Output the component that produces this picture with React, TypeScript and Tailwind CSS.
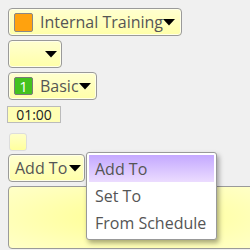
const font = { fontFamily: '"Open Sans", "Noto Sans", sans-serif' };

function Caret() {
  return (
    <svg width="12" height="7" viewBox="0 0 12 7" className="shrink-0">
      <polygon points="0,0 12,0 6,6.5" fill="#000" />
    </svg>
  );
}

const boxCls =
  "flex items-center whitespace-nowrap h-[28px] rounded-[4px] border border-[#9a9a9a] bg-gradient-to-b from-[#ffffd0] to-[#ffffa8] shadow-[inset_0_0_0_1px_#ffffe8]";

export default function App() {
  return (
    <div className="w-[250px] h-[250px] bg-[#f0f0f0] overflow-hidden relative" style={font}>
      <div className="flex flex-col items-start pl-2 pt-2">
        <div className={`${boxCls} w-[174px] pl-[5px] pr-[5px]`}>
          <span className="w-[19px] h-[19px] bg-[#ffa20e] border border-[#888] rounded-[2px]" />
          <span className="ml-[7px] text-[16px] text-[#555] leading-none">Internal Training</span>
          <Caret />
        </div>

        <div className={`${boxCls} w-[54px] mt-[4px] justify-end pr-[4px]`}>
          <Caret />
        </div>

        <div className={`${boxCls} w-[89px] mt-[4px] pl-[5px] pr-[5px]`}>
          <span className="w-[19px] h-[18px] bg-[#44c21e] border border-[#7a7a7a] rounded-[2px] text-white text-[15px] leading-[16px] text-center">1</span>
          <span className="ml-[7px] text-[16px] text-[#555] leading-none">Basic</span>
          <Caret />
        </div>

        <div className="-ml-px mt-[6px] w-[54px] h-[17px] border border-[#bbb] bg-[#ffffb4] text-[14px] text-[#222] leading-[15px] text-center">
          01:00
        </div>

        <div className="ml-px mt-[10px] w-[18px] h-[18px] rounded-[3px] border border-[#ddd] bg-gradient-to-b from-[#ffffc8] to-[#ffff9c]" />

        <div className={`${boxCls} w-[77px] mt-[3px] pl-[6px] pr-[4px]`}>
          <span className="text-[16px] text-[#555] leading-none mr-[2px]">Add To</span>
          <Caret />
        </div>

        <div className="mt-[4px] w-[250px] h-[63px] rounded-[4px] border border-[#9a9a9a] bg-[radial-gradient(ellipse_at_center,#ffff90_0%,#ffffb8_70%,#ffffc8_100%)]" />
      </div>

      <div className="absolute left-[86px] top-[152px] w-[131px] h-[88px] bg-white border border-[#999] rounded-[3px] shadow-[2px_3px_5px_rgba(0,0,0,0.35)] p-[2px] text-[16px] text-[#555]">
        <div className="h-[27px] pl-[6px] flex items-center bg-gradient-to-b from-[#c4a8ff] to-[#ecdcff]">Add To</div>
        <div className="h-[27px] pl-[6px] flex items-center">Set To</div>
        <div className="h-[27px] pl-[6px] flex items-center">From Schedule</div>
      </div>
    </div>
  );
}
